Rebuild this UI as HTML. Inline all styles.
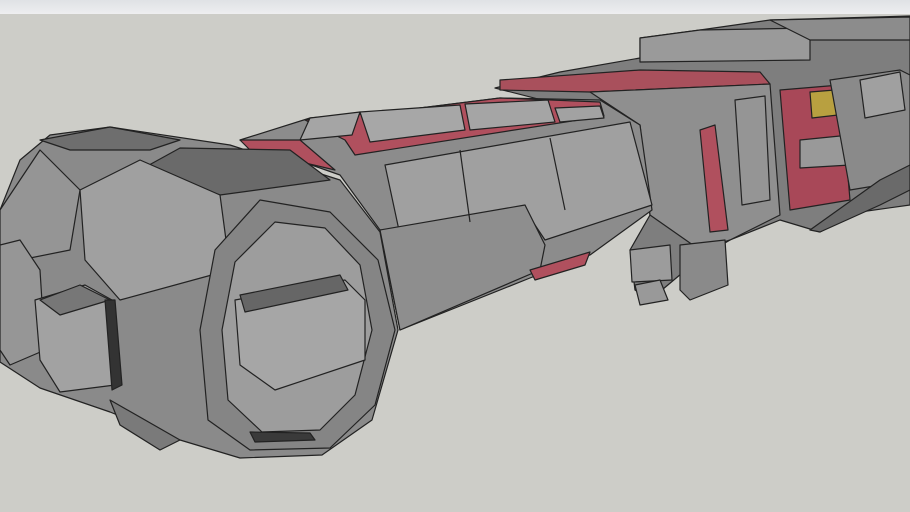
<!DOCTYPE html>
<html><head><meta charset="utf-8"><style>
html,body{margin:0;padding:0;width:910px;height:512px;overflow:hidden;background:#cdcdc8}
.top{position:absolute;left:0;top:0;width:910px;height:14px;background:linear-gradient(#dfe2e5,#eeeef0)}
svg{position:absolute;left:0;top:0}
</style></head><body>
<div class="top"></div>
<svg width="910" height="512" viewBox="0 0 910 512" stroke="#222" stroke-width="1.2" stroke-linejoin="round">
<!-- rear section -->
<polygon points="495,88 560,72 640,58 640,38 700,30 770,20 910,16 910,205 860,212 820,232 780,220 730,240 700,258 650,300 635,290 630,250 650,215 640,125" fill="#7e7e7e"/>
<polygon points="640,38 700,30 810,28 810,60 640,62" fill="#9a9a9a"/>
<polygon points="770,20 910,17 910,40 810,40" fill="#8c8c8c"/>
<polygon points="500,80 640,70 760,72 770,84 590,92 500,90" fill="#a9505c"/>
<polygon points="590,92 770,84 780,215 730,240 700,250 650,215 640,125" fill="#8f8f8f"/>
<polygon points="735,100 765,96 770,200 742,205" fill="#959595"/>
<polygon points="700,130 715,125 728,230 710,232" fill="#b0505e"/>
<polygon points="780,90 840,85 850,200 790,210" fill="#a84858"/>
<polygon points="810,92 835,90 838,115 812,118" fill="#b8a040"/>
<polygon points="800,140 850,135 850,165 800,168" fill="#999"/>
<polygon points="830,80 900,70 910,75 910,180 850,190" fill="#8a8a8a"/>
<polygon points="860,80 900,72 905,110 865,118" fill="#a0a0a0"/>
<polygon points="810,230 880,180 910,165 910,190 880,205 820,232" fill="#6a6a6a"/>
<polygon points="630,250 670,245 672,280 632,282" fill="#9c9c9c"/>
<polygon points="680,245 725,240 728,285 690,300 680,290" fill="#8a8a8a"/>
<polygon points="635,285 660,280 668,300 640,305" fill="#999"/>
<!-- mid section -->
<polygon points="240,140 310,118 420,108 500,98 600,100 640,125 652,210 590,255 530,278 400,330 380,230 340,175" fill="#8c8c8c"/>
<polygon points="305,120 420,108 500,98 600,102 604,116 355,155 345,140" fill="#b0505e"/>
<polygon points="310,118 360,112 352,135 300,140" fill="#a5a5a5"/>
<polygon points="360,112 460,105 465,130 370,142" fill="#a7a7a7"/>
<polygon points="465,104 548,100 555,122 470,130" fill="#a5a5a5"/>
<polygon points="555,108 600,106 604,118 560,122" fill="#a2a2a2"/>
<polygon points="240,140 300,140 335,170 250,150" fill="#b0505e"/>
<polygon points="385,165 630,122 652,205 545,240 525,210 400,235" fill="#a0a0a0"/>
<polygon points="380,230 525,205 545,245 540,270 400,330" fill="#8e8e8e"/>
<polygon points="530,270 590,252 585,265 535,280" fill="#b0505e"/>
<line x1="460" y1="150" x2="470" y2="222" />
<line x1="550" y1="138" x2="565" y2="210" />
<!-- front bulk -->
<polygon points="0,210 20,160 50,135 110,127 230,145 340,180 380,232 398,330 372,420 322,455 240,458 180,440 110,412 40,388 0,362" fill="#8a8a8a"/>
<polygon points="40,140 110,127 180,140 150,150 70,150" fill="#6e6e6e"/>
<polygon points="140,170 180,148 290,150 330,180 220,195" fill="#6a6a6a"/>
<polygon points="80,190 140,160 220,195 230,270 120,300 85,260" fill="#a0a0a0"/>
<polygon points="0,210 40,150 80,190 70,250 20,260 0,250" fill="#959595"/>
<!-- end cap -->
<polygon points="260,200 330,212 378,260 395,330 375,405 330,448 250,450 208,420 200,330 215,250" fill="#858585"/>
<polygon points="275,222 325,228 360,265 372,330 355,395 320,430 262,432 228,400 222,330 235,262" fill="#9d9d9d"/>
<polygon points="235,300 345,280 365,300 365,360 275,390 240,365" fill="#a6a6a6"/>
<polygon points="240,295 340,275 348,290 245,312" fill="#666"/>
<polygon points="250,432 310,433 315,440 255,442" fill="#3a3a3a"/>
<!-- left nozzle blocks -->
<polygon points="0,245 20,240 40,270 45,350 10,365 0,350" fill="#969696"/>
<polygon points="35,300 85,285 112,300 115,385 60,392 40,360" fill="#a2a2a2"/>
<polygon points="40,300 80,285 110,300 60,315" fill="#777"/>
<polygon points="105,300 115,300 122,385 112,390" fill="#333"/>
<polygon points="110,400 180,440 160,450 120,425" fill="#7a7a7a"/>
</svg>
</body></html>
